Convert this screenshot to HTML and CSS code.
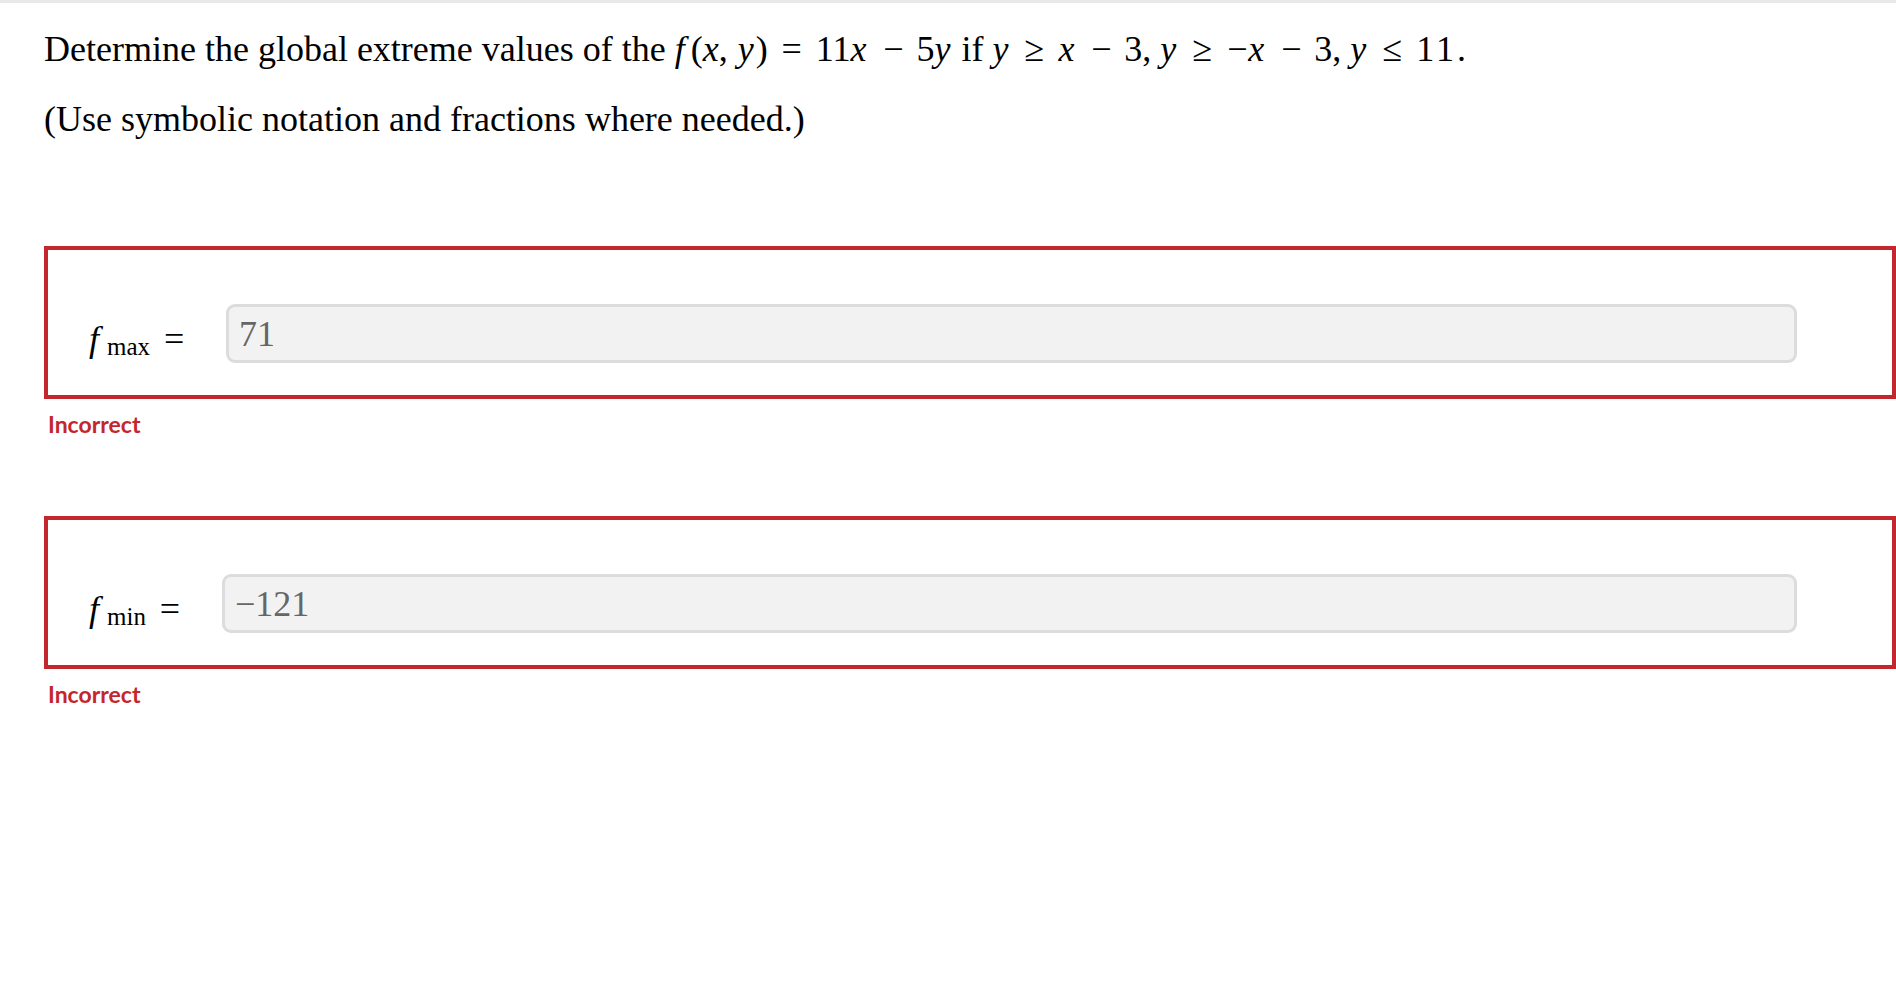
FILE: index.html
```html
<!DOCTYPE html>
<html lang="en">
<head>
    <meta charset="UTF-8">
    <meta name="viewport" content="width=device-width, initial-scale=1.0">
    <title>Global Extreme Values</title>
    <link rel="stylesheet" href="styles.css">
</head>
<body>
    <div class="top-rule"></div>
    <div class="question">
        <p class="prompt">Determine the global extreme values of the <span class="math"><i class="f">f</i>(<i>x</i><span class="comma">,</span><i class="y">y</i>)<span class="op rel">=</span>11<i class="x">x</i><span class="op bin">−</span>5<i class="y">y</i></span> if <span class="math"><i class="y">y</i><span class="op rel">≥</span><i class="x">x</i><span class="op bin">−</span>3<span class="comma wide">,</span><i class="y">y</i><span class="op rel">≥</span><span class="op unary">−</span><i class="x">x</i><span class="op bin">−</span>3<span class="comma wide">,</span><i class="y">y</i><span class="op rel">≤</span><span class="num">11</span></span>.</p>
        <p class="prompt note">(Use symbolic notation and fractions where needed.)</p>

        <div class="answer">
            <div class="answer-box">
                <label class="answer-label" for="fmax"><i>f</i><span class="sub">max</span><span class="op rel">=</span></label>
                <input type="text" id="fmax" class="answer-field" value="71" readonly>
            </div>
            <div class="feedback">Incorrect</div>
        </div>

        <div class="answer">
            <div class="answer-box">
                <label class="answer-label" for="fmin"><i>f</i><span class="sub">min</span><span class="op rel">=</span></label>
                <input type="text" id="fmin" class="answer-field" value="−121" readonly>
            </div>
            <div class="feedback">Incorrect</div>
        </div>
    </div>
</body>
</html>
```

FILE: styles.css
```css
body {
    margin: 0;
    padding: 0;
    background-color: #fff;
    color: #000;
    font-family: "Liberation Serif", "Times New Roman", serif;
}
.top-rule {
    height: 3px;
    background-color: #e9e9e9;
}
.question {
    padding-left: 44px;
}
.prompt {
    margin: 26px 0 0 0;
    font-size: 36px;
    line-height: 40px;
    white-space: nowrap;
}
.prompt.note {
    margin-top: 30px;
}
/* math spacing roughly like MathJax's TeX metrics */
.math i {
    font-style: italic;
}
.math i.f {
    padding-right: 6px;
}
.math i.x {
    padding-right: 4px;
}
.math i.y {
    padding-right: 2px;
}
.math .num {
    letter-spacing: 3px;
}
.op {
    display: inline-block;
    width: 28px;
    text-align: center;
}
.op.rel {
    margin: 0 10px;
}
.op.bin {
    margin: 0 9px;
}
.op.unary {
    width: 22px;
}
.comma {
    margin-right: 10px;
}
.comma.wide {
    margin-right: 9px;
}
.answer {
    margin-top: 107px;
}
.answer + .answer {
    margin-top: 78px;
}
.answer-box {
    display: flex;
    align-items: center;
    border: 4px solid #c1272d;
    padding: 54px 95px 32px 40px;
}
.answer-label {
    height: 40px;
    font-size: 36px;
    line-height: 40px;
    padding-top: 10px;
    margin-right: 38px;
    white-space: nowrap;
}
.answer-label i {
    margin-left: 1px;
}
.answer-label .sub {
    font-size: 25px;
    line-height: 1;
    vertical-align: -4px;
    margin-left: 8px;
}
.answer-label .op.rel {
    margin-right: 0;
}
.answer-field {
    flex: 1;
    height: 59px;
    box-sizing: border-box;
    padding: 0 10px;
    border: 3px solid #dcdcdc;
    border-radius: 9px;
    background-color: #f2f2f2;
    color: #666;
    font-family: "Liberation Serif", "Times New Roman", serif;
    font-size: 36px;
    outline: none;
}
.feedback {
    margin-top: 11px;
    padding-left: 4px;
    font-family: Lato, "Open Sans", sans-serif;
    font-weight: bold;
    font-size: 23px;
    color: #c4262c;
}
```
